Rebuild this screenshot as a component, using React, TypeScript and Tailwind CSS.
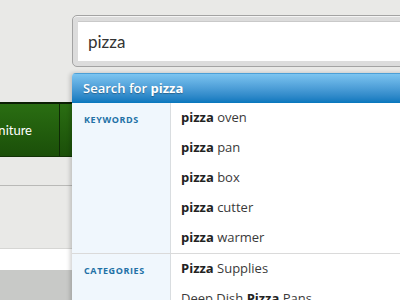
import React from 'react';

const keywords = ['oven', 'pan', 'box', 'cutter', 'warmer'];

export default function App() {
  return (
    <div className="relative w-[400px] h-[300px] overflow-hidden bg-[#e9e9e7] font-['Lato','Open_Sans',sans-serif]">
      {/* Header with search field */}
      <div className="h-[102px] pl-[72px] pt-[15px]">
        <div className="w-[340px] h-[52px] rounded-[5px] border border-[#a3a3a3] bg-[#dcdcdc] p-[5px] shadow-[inset_0_1px_0_#f4f4f4]">
          <div className="h-full bg-white border-t border-[#c9c9c9] flex items-center pl-[10px] text-[17px] text-[#333]">
            pizza
          </div>
        </div>
      </div>

      {/* Nav bar */}
      <div className="h-[55px] flex border-t-2 border-b border-t-[#0c1f05] border-b-[#123306] bg-gradient-to-b from-[#2a6e12] to-[#1b4f09]">
        <div className="w-[60px] border-r border-[#0e2a05] flex items-center justify-end pr-[27px] pt-[2px] text-[13px] text-white whitespace-nowrap">
          Furniture
        </div>
        <div className="flex-1" />
      </div>

      {/* Content stripes */}
      <div className="h-[29px] border-b border-[#b9b9b7]" />
      <div className="h-[63px] border-b border-[#d6d6d4]" />
      <div className="h-[21px] bg-white" />
      <div className="h-[40px] bg-[#c8c9c7]" />

      {/* Suggestion dropdown */}
      <div className="absolute left-[72px] top-[73px] w-[340px] rounded-tl-[4px] overflow-hidden shadow-[-2px_0_4px_rgba(0,0,0,0.18)] font-['Open_Sans',sans-serif]">
        <div className="h-[30px] flex items-center pl-[11px] bg-gradient-to-b from-[#7cc4f0] to-[#0677bd] border-t border-[#4c9fd6] text-[13px] font-semibold text-white [text-shadow:0_1px_1px_rgba(0,0,0,0.3)]">
          Search for&nbsp;<span className="font-bold">pizza</span>
        </div>
        <div className="flex bg-white border-b border-[#dadada]">
          <div className="w-[99px] bg-[#f0f7fd] border-r border-[#d9dde0] pl-[12px] pt-[10px] text-[9px] font-bold tracking-[0.6px] text-[#2271a6]">
            KEYWORDS
          </div>
          <div className="flex-1 flex flex-col">
            {keywords.map((k) => (
              <div key={k} className="h-[30px] flex items-center pl-[10px] text-[13px] text-[#3a3a3a]">
                <span className="font-bold text-[#222]">pizza</span>&nbsp;{k}
              </div>
            ))}
          </div>
        </div>
        <div className="flex bg-white">
          <div className="w-[99px] bg-[#f0f7fd] border-r border-[#d9dde0] pl-[12px] pt-[10px] text-[9px] font-bold tracking-[0.6px] text-[#2271a6]">
            CATEGORIES
          </div>
          <div className="flex-1 flex flex-col">
            <div className="h-[30px] flex items-center pl-[10px] text-[13px] text-[#3a3a3a]">
              <span className="font-bold text-[#222]">Pizza</span>&nbsp;Supplies
            </div>
            <div className="h-[30px] flex items-center pl-[10px] text-[13px] text-[#3a3a3a]">
              Deep Dish&nbsp;<span className="font-bold text-[#222]">Pizza</span>&nbsp;Pans
            </div>
          </div>
        </div>
      </div>
    </div>
  );
}
